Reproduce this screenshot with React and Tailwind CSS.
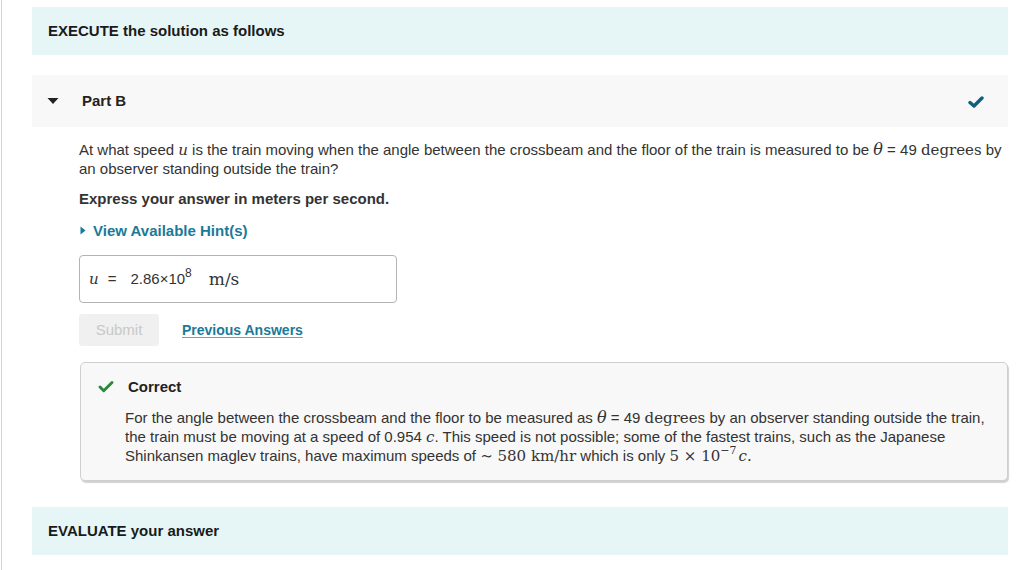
import { Check } from "lucide-react"

const math = "font-['DejaVu_Serif',serif] leading-none"

function Section({ children, className = "" }) {
  return (
    <div className={`h-[48px] bg-[#e6f6f7] flex items-center px-4 text-[15px] font-bold text-[#1a1a1a] ${className}`}>
      {children}
    </div>
  )
}

export default function App() {
  return (
    <div className="w-[1024px] h-[570px] bg-white overflow-hidden font-['Liberation_Sans',Arial,sans-serif]">
      <div className="ml-px h-full border-l border-[#c9d4df] pl-[30px] pr-4 pt-[7px]">
        <Section>EXECUTE the solution as follows</Section>

        {/* Part B header */}
        <div className="mt-5 h-[52px] bg-[#f8f8f8] flex items-center pl-[15px] pr-[24px]">
          <svg width="12" height="8" viewBox="0 0 12 8" className="mr-[23px]">
            <path d="M0.5 1 L11.5 1 L6 7 Z" fill="#222" />
          </svg>
          <span className="text-[15px] font-bold text-[#222]">Part B</span>
          <svg width="16" height="12" viewBox="0 0 16 12" className="ml-auto mt-[2px]">
            <path d="M2 6.5 L6 10 L14 2" fill="none" stroke="#0f5f7a" strokeWidth="3.4" strokeLinecap="round" strokeLinejoin="round" />
          </svg>
        </div>

        <div className="pl-[47px] pt-[13px] text-[15px] text-[#333]">
          <p className="leading-[19px]">
            At what speed <span className={`${math} italic text-[15px]`}>u</span> is the train moving when the angle between the crossbeam and the floor of the train is measured to be{" "}
            <span className={`${math} italic text-[16px]`}>θ</span> = 49 <span className={`${math} text-[15px]`}>degrees</span> by an observer standing outside the train?
          </p>
          <p className="mt-[11px] font-bold leading-[19px]">Express your answer in meters per second.</p>
          <div className="mt-[13px] flex items-center text-[#1a7a99] font-bold leading-[19px]">
            <svg width="6" height="9" viewBox="0 0 6 9" className="mr-[7px] ml-[1px]">
              <path d="M0.5 0.5 L5.5 4.5 L0.5 8.5 Z" fill="#1a7a99" />
            </svg>
            View Available Hint(s)
          </div>

          {/* answer box */}
          <div className="mt-[15px] w-[318px] h-[48px] border border-[#b3b3b3] rounded-[4px] flex items-center pl-[9px] text-[15px]">
            <span className={`${math} italic text-[15px]`}>u</span>
            <span className="ml-[9px]">=</span>
            <span className="ml-[14px]">2.86×10<sup className="text-[12px] -top-[0.55em]">8</sup></span>
            <span className={`${math} text-[17px] ml-[17px]`}>m/s</span>
          </div>

          <div className="mt-[11px] flex items-center">
            <div className="w-[80px] h-[32px] bg-[#f0f0f0] rounded-[3px] flex items-center justify-center text-[#c8c8c8]">Submit</div>
            <span className="ml-[23px] text-[14px] font-bold text-[#1a7a99] underline underline-offset-2 decoration-[#5aaac0]">Previous Answers</span>
          </div>

          {/* feedback */}
          <div className="mt-[16px] ml-px h-[119px] bg-[#f8f8f8] border border-[#cfcfcf] rounded-[5px] shadow-[1px_2px_1px_rgba(0,0,0,0.18)] pl-[16px] pr-4 pt-[13px]">
            <div className="flex items-center">
              <Check size={18} strokeWidth={4} color="#2a8a3e" />
              <span className="ml-[13px] text-[15px] font-bold text-[#222]">Correct</span>
            </div>
            <p className="mt-[9px] ml-[28px] leading-[19px] text-[15px] text-[#333]">
              For the angle between the crossbeam and the floor to be measured as <span className={`${math} italic text-[16px]`}>θ</span> = 49{" "}
              <span className={`${math} text-[15px]`}>degrees</span> by an observer standing outside the train,
              <br />
              the train must be moving at a speed of 0.954 <span className={`${math} italic text-[15px]`}>c</span>. This speed is not possible; some of the fastest trains, such as the Japanese
              <br />
              Shinkansen maglev trains, have maximum speeds of <span className={`${math} text-[15px]`}>∼ 580 km/hr</span> which is only{" "}
              <span className={`${math} text-[15px]`}>
                5 × 10<sup className="text-[11px] -top-[0.6em] mr-[2px] leading-none">−7</sup>
                <span className="italic">c</span>.
              </span>
            </p>
          </div>
        </div>

        <Section className="mt-[26px]">EVALUATE your answer</Section>
      </div>
    </div>
  )
}
